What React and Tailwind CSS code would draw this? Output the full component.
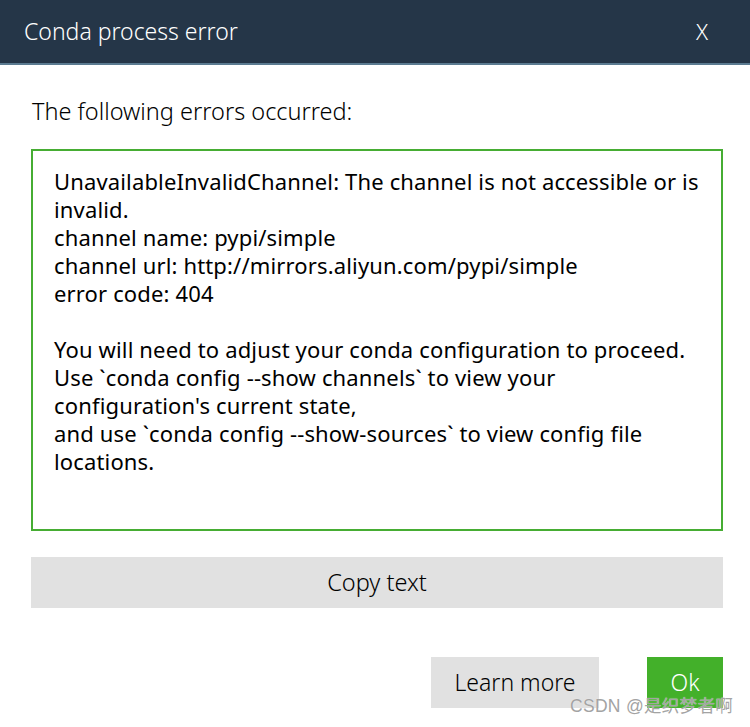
import React from "react";

const font = { fontFamily: '"Noto Sans", "Open Sans", sans-serif' };

export default function App() {
  const lines = [
    "UnavailableInvalidChannel: The channel is not accessible or is",
    "invalid.",
    "channel name: pypi/simple",
    "channel url: http://mirrors.aliyun.com/pypi/simple",
    "error code: 404",
    "\u00a0",
    "You will need to adjust your conda configuration to proceed.",
    "Use `conda config --show channels` to view your",
    "configuration's current state,",
    "and use `conda config --show-sources` to view config file",
    "locations.",
  ];
  return (
    <div className="relative w-[750px] h-[727px] bg-white overflow-hidden text-black" style={font}>
      <div className="h-[65px] bg-[#253648] border-b-[2px] border-[#5b7b91] flex items-center justify-between pl-[24px] pr-[42px]">
        <span className="text-white text-[23px] font-light">Conda process error</span>
        <span className="text-white text-[22px] font-light">X</span>
      </div>
      <div className="pl-[31px] pr-[27px] pt-[31px]">
        <div className="text-[23.5px] leading-[30px] font-light pl-[1px]">The following errors occurred:</div>
        <div className="mt-[23px] h-[382px] border-2 border-[#46ad33] pl-[21px] pt-[16px]">
          {lines.map((l, i) => (
            <div key={i} className="text-[22px] leading-[28px] tracking-[0.15px] whitespace-nowrap">{l}</div>
          ))}
        </div>
        <div className="mt-[26px] h-[51px] bg-[#e1e1e1] flex items-center justify-center text-[23.5px] font-light">
          Copy text
        </div>
        <div className="mt-[49px] flex justify-end gap-[48px]">
          <div className="w-[168px] h-[51px] bg-[#e1e1e1] flex items-center justify-center text-[23px] font-light">Learn more</div>
          <div className="w-[76px] h-[51px] bg-[#43b02a] flex items-center justify-center text-[23px] font-light text-white">Ok</div>
        </div>
      </div>
      <div
        className="absolute right-[17px] bottom-[8px] text-[17.5px] text-[#a3a3a3] tracking-[0.3px]"
        style={{ fontFamily: '"Liberation Sans", "Noto Sans CJK SC", sans-serif', textShadow: "0 0 1px rgba(255,255,255,0.8)" }}
      >
        CSDN @是织梦者啊
      </div>
    </div>
  );
}
